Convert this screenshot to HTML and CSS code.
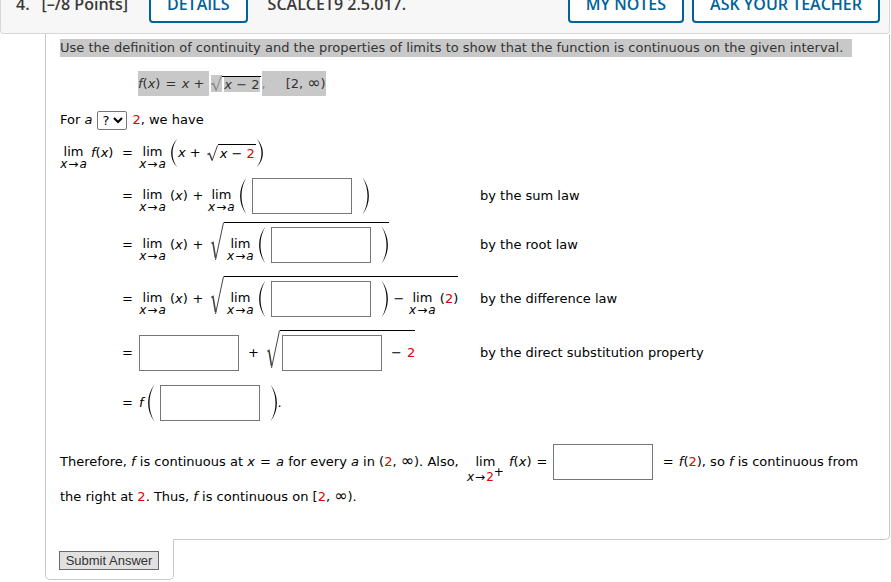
FILE: index.html
```html
<!DOCTYPE html>
<html lang="en">
<head>
    <meta charset="UTF-8">
    <meta name="viewport" content="width=device-width, initial-scale=1.0">
    <title>SCALCET9 2.5.017</title>
    <link rel="stylesheet" href="styles.css">
</head>
<body>
    <!-- shared math shapes -->
    <svg class="defs" aria-hidden="true">
        <symbol id="paren-open" viewBox="0 0 8 38" preserveAspectRatio="none">
            <path d="M7.500 .5C-1 11-1 27 7.500 37.500C.8 27 .8 11 7.500 .5z"/>
        </symbol>
        <symbol id="paren-close" viewBox="0 0 8 38" preserveAspectRatio="none">
            <path d="M.5 .5C9 11 9 27 .5 37.500C7.200 27 7.200 11 .5 .5z"/>
        </symbol>
        <symbol id="root-big" viewBox="0 0 13 40">
            <path d="M.5 21.500L2 20.500L4.500 36" stroke-width="1.600"/>
            <path d="M4.500 38L12.500 .5" stroke-width="1"/>
        </symbol>
        <symbol id="root-small" viewBox="0 0 11 17">
            <path d="M.5 9.500L2.500 8.500L5 15" stroke-width="1.500"/>
            <path d="M5 16L10.500 .5" stroke-width="1"/>
        </symbol>
    </svg>

    <header class="header">
        <span class="points"><span>4.</span><span>[–/8 Points]</span></span>
        <button type="button" class="btn details">DETAILS</button>
        <span class="code">SCALCET9 2.5.017.</span>
        <button type="button" class="btn">MY NOTES</button>
        <button type="button" class="btn">ASK YOUR TEACHER</button>
    </header>

    <main class="question">
        <p class="prompt"><span class="selected">Use the definition of continuity and the properties of limits to show that the function is continuous on the given interval. </span></p>

        <div class="function">
            <span class="selected formula"><i>f</i>(<i>x</i>) <span class="eq">=</span> <i>x</i> +</span>
            <svg class="root-small selected"><use href="#root-small"/></svg>
            <span class="bar"><span class="selected"><i>x</i> − 2</span></span>
            <span class="selected interval"><span class="comma">,</span>[2, <span class="inf">∞</span>)</span>
        </div>

        <div class="compare">
            <label for="relation">For <i>a</i></label>
            <select id="relation">
                <option>?</option>
                <option>&lt;</option>
                <option>&gt;</option>
                <option>=</option>
            </select>
            <span><b>2</b>, we have</span>
        </div>

        <div class="steps">
            <div class="math">
                <span class="lim">lim<small><i>x</i><span class="to">→</span><i>a</i></small></span>
                <span><i>f</i>(<i>x</i>)</span>
            </div>
            <div>=</div>
            <div class="math">
                <span class="lim">lim<small><i>x</i><span class="to">→</span><i>a</i></small></span>
                <svg class="paren short"><use href="#paren-open"/></svg>
                <span><i>x</i> +</span>
                <svg class="root-small spaced"><use href="#root-small"/></svg>
                <span class="bar"><span><i>x</i> − <b>2</b></span></span>
                <svg class="paren short"><use href="#paren-close"/></svg>
            </div>
            <div></div>

            <div></div>
            <div>=</div>
            <div class="math">
                <span class="lim">lim<small><i>x</i><span class="to">→</span><i>a</i></small></span>
                <span class="arg">(<i>x</i>)</span>
                <span class="op">+</span>
                <span class="lim">lim<small><i>x</i><span class="to">→</span><i>a</i></small></span>
                <svg class="paren"><use href="#paren-open"/></svg>
                <input type="text" aria-label="Sum law answer">
                <svg class="paren close"><use href="#paren-close"/></svg>
            </div>
            <div>by the sum law</div>

            <div></div>
            <div>=</div>
            <div class="math">
                <span class="lim">lim<small><i>x</i><span class="to">→</span><i>a</i></small></span>
                <span class="arg">(<i>x</i>)</span>
                <span class="op">+</span>
                <svg class="root-big"><use href="#root-big"/></svg>
                <div class="math radicand">
                    <span class="lim">lim<small><i>x</i><span class="to">→</span><i>a</i></small></span>
                    <svg class="paren"><use href="#paren-open"/></svg>
                    <input type="text" aria-label="Root law answer">
                    <svg class="paren close"><use href="#paren-close"/></svg>
                </div>
            </div>
            <div>by the root law</div>

            <div></div>
            <div>=</div>
            <div class="math">
                <span class="lim">lim<small><i>x</i><span class="to">→</span><i>a</i></small></span>
                <span class="arg">(<i>x</i>)</span>
                <span class="op">+</span>
                <svg class="root-big"><use href="#root-big"/></svg>
                <div class="math radicand">
                    <span class="lim">lim<small><i>x</i><span class="to">→</span><i>a</i></small></span>
                    <svg class="paren"><use href="#paren-open"/></svg>
                    <input type="text" aria-label="Difference law answer">
                    <svg class="paren close"><use href="#paren-close"/></svg>
                    <span class="op">−</span>
                    <span class="lim">lim<small><i>x</i><span class="to">→</span><i>a</i></small></span>
                    <span class="arg">(<b>2</b>)</span>
                </div>
            </div>
            <div>by the difference law</div>

            <div></div>
            <div>=</div>
            <div class="math">
                <input type="text" aria-label="Direct substitution, first term">
                <span class="op after-input">+</span>
                <svg class="root-big"><use href="#root-big"/></svg>
                <div class="math radicand tight">
                    <input type="text" aria-label="Direct substitution, under the root">
                    <span class="op after-input">−</span>
                    <b>2</b>
                </div>
            </div>
            <div>by the direct substitution property</div>

            <div></div>
            <div>=</div>
            <div class="math">
                <i>f</i>
                <svg class="paren"><use href="#paren-open"/></svg>
                <input type="text" aria-label="Argument of f">
                <svg class="paren close"><use href="#paren-close"/></svg>
                <span>.</span>
            </div>
            <div></div>
        </div>

        <p class="conclusion">Therefore, <i>f</i> is continuous at <i>x</i> <span class="eq">=</span> <i>a</i> for every <i>a</i> in (<b>2</b>, <span class="inf">∞</span>). Also, <span class="lim">lim<small><i>x</i><span class="to">→</span><b>2</b><sup>+</sup></small></span> <i>f</i>(<i>x</i>) <span class="eq">=</span> <input type="text" aria-label="Right-hand limit"> <span class="eq">=</span> <i>f</i>(<b>2</b>), so <i>f</i> is continuous from the right at <b>2</b>. Thus, <i>f</i> is continuous on [<b>2</b>, <span class="inf">∞</span>).</p>
    </main>

    <div class="submit">
        <button type="button">Submit Answer</button>
    </div>
</body>
</html>
```
FILE: styles.css
```css
* {
    box-sizing: border-box;
}
body {
    margin: 0;
    background: white;
    color: black;
    font-family: Verdana, "DejaVu Sans", sans-serif;
    font-size: 13px;
    line-height: 18px;
}
p {
    margin: 0;
}
b {
    color: #e00000;
    font-weight: normal;
}
.defs {
    display: none;
}

/* question header */
.header {
    display: flex;
    align-items: flex-end;
    height: 34px;
    padding: 0 9px 10px 15px;
    margin-right: 1px;
    overflow: hidden;
    background: #f7f7f7;
    border: 1px solid #d8d8d8;
    border-top: none;
    border-radius: 0 0 4px 4px;
    color: #3a3a3a;
    font: 600 16px/22px "Open Sans", sans-serif;
}
.points, .code {
    padding-bottom: 8px;
    white-space: nowrap;
}
.points {
    display: flex;
    gap: 12px;
}
.code {
    flex: 1;
}
.btn {
    flex: none;
    margin-left: 8px;
    padding: 5px 16px 6px;
    background: white;
    border: 2px solid #006298;
    border-radius: 4px;
    color: #006298;
    font: inherit;
}
.details {
    margin: 0 20px 0 21px;
}

/* question body */
.question {
    margin: 0 1px 0 45px;
    padding: 5px 14px 30px;
    border: 1px solid #c8c8c8;
    border-top: none;
    border-bottom-right-radius: 5px;
}
.selected {
    background: #c8c8c8;
    color: #333;
}
.prompt .selected {
    display: inline-block;
    padding-right: 9px;
}
.function {
    display: flex;
    align-items: center;
    margin: 14px 0 14px 78px;
    line-height: 25px;
}
.formula {
    padding-right: 5px;
}
.function .bar {
    color: black;
    line-height: 15px;
}
.function .root-small {
    margin-left: 2px;
    stroke: #888;
}
.interval {
    margin-left: 1px;
}
.comma {
    margin-right: 20px;
    color: #888;
}
.compare {
    display: flex;
    align-items: center;
    gap: 5px;
    height: 20px;
}
select {
    width: 30px;
    height: 19px;
    padding: 0;
    background: white;
    border: 1px solid #767676;
    border-radius: 2px;
    font: inherit;
}

/* math pieces */
.eq {
    margin: 0 1px;
}
.inf {
    font-size: 16px;
    line-height: 0;
}
.math {
    display: flex;
    align-items: center;
}
.lim {
    display: inline-flex;
    flex-direction: column;
    align-items: center;
    width: 27px;
    margin-right: 1px;
    padding-top: 8px;
    line-height: 14px;
}
.lim small {
    font-size: 12px;
    line-height: 10px;
    white-space: nowrap;
}
.to {
    margin: 0 1px;
}
.lim + span {
    margin-left: 3px;
}
.op {
    width: 20px;
    text-align: center;
}
.after-input {
    width: 25px;
    padding-left: 9px;
    text-align: left;
}
.paren {
    width: 8px;
    height: 38px;
    margin: 0 5px 0 3px;
}
.paren.close {
    margin: 0 0 0 10px;
}
.paren.short {
    height: 30px;
    margin: 0 0 0 3px;
}
.bar + .paren.short {
    margin: 0;
}
.bar {
    padding: 0 1px 0 2px;
    border-top: 1px solid black;
}
.root-small {
    width: 11px;
    height: 17px;
}
.root-small.spaced {
    margin-left: 6px;
}
.root-small, .root-big {
    fill: none;
    stroke: #444;
}
.root-big {
    width: 13px;
    height: 40px;
    margin: 0 0 6px 3px;
}
.radicand {
    height: 46px;
    padding: 0 0 2px 3px;
    border-top: 1px solid black;
}
.radicand.tight {
    padding-left: 2px;
}
input {
    width: 100px;
    height: 36px;
    padding: 2px 4px;
    border: 1px solid #767676;
    font: inherit;
}

/* derivation, one row per law */
.steps {
    display: grid;
    grid-template-columns: 62px 17px 341px 1fr;
    grid-template-rows: 42px 44px repeat(3, 54px) 46px;
    align-items: center;
    margin-top: 2px;
}

.conclusion {
    margin-top: 13px;
    line-height: 24px;
}
.conclusion .lim {
    width: 37px;
    margin-left: 4px;
    padding-top: 16px;
    vertical-align: middle;
}
.conclusion .lim small {
    line-height: 16px;
}
.conclusion sup {
    font-size: 12px;
    line-height: 0;
}
.conclusion input {
    margin-right: 5px;
    vertical-align: middle;
}

/* tab under the question */
.submit {
    width: 129px;
    margin: -1px 0 0 45px;
    padding: 12px 14px 9px 13px;
    background: white;
    border: 1px solid #c8c8c8;
    border-top: none;
    border-radius: 0 0 5px 5px;
}
.submit button {
    display: block;
    width: 100px;
    height: 19px;
    padding: 0;
    background: #e1e1e1;
    border: 1px solid #6a6a6a;
    color: #333;
    font: 13px "Liberation Sans", sans-serif;
}
```
